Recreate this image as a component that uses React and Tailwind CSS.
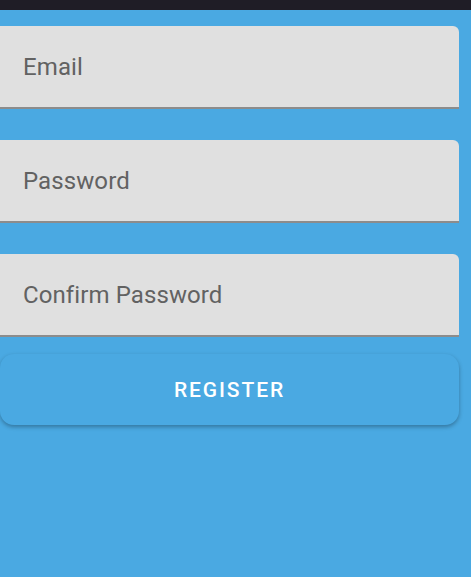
import React from "react";

function Field({ label }) {
  return (
    <div className="flex h-[83px] w-[459px] items-center rounded-tr-[6px] border-b-2 border-[#8c8c8c] bg-[#e0e0e0] pl-[23px]">
      <span className="text-[24px] tracking-[0.1px] text-[#626262]">{label}</span>
    </div>
  );
}

export default function App() {
  return (
    <div className="flex h-[577px] w-[471px] flex-col bg-[#4aa9e2] font-['Roboto',sans-serif]">
      <div className="h-[10px] bg-[#1f1d26]" />
      <div className="flex flex-col pt-[16px]">
        <Field label="Email" />
        <div className="h-[31px]" />
        <Field label="Password" />
        <div className="h-[31px]" />
        <Field label="Confirm Password" />
        <button
          type="button"
          className="mt-[17px] flex h-[71px] w-[459px] items-center justify-center rounded-[14px] bg-[#4aa9e2] pt-[3px] text-[21px] font-medium tracking-[1.9px] text-white shadow-[0_2px_4px_rgba(0,0,0,0.3)]"
        >
          REGISTER
        </button>
      </div>
    </div>
  );
}
